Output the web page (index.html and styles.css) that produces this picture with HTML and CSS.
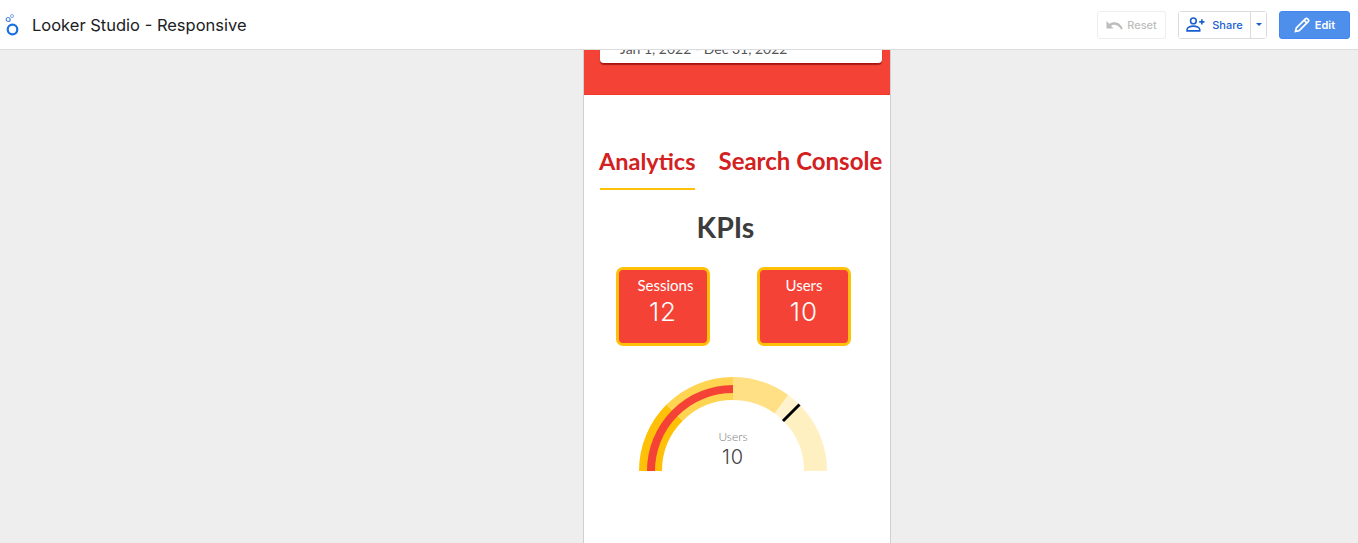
FILE: index.html
```html
<!DOCTYPE html>
<html lang="en">
<head>
  <meta charset="UTF-8" />
  <title>Looker Studio - Responsive</title>
  <link rel="stylesheet" href="styles.css">
</head>
<body>
  <header class="topbar">
    <svg class="logo" width="16" height="22" viewBox="0 0 16 22">
      <circle cx="7.500" cy="15.500" r="4.800" fill="none" stroke="#1a6fe0" stroke-width="2.200"/>
      <circle cx="3.200" cy="5.500" r="2" fill="none" stroke="#4f88e4" stroke-width="1.200"/>
      <circle cx="7" cy="2" r="1.500" fill="none" stroke="#7ea8ea" stroke-width="1"/>
    </svg>
    <div class="title">Looker Studio - Responsive</div>
    <div class="actions">
      <button class="btn btn-reset">
        <svg width="17" height="10" viewBox="0 0 17 10"><path d="M0.500 1v7.500h7L5 6C6.200 5 7.400 4.700 8.800 4.800c2.600.2 4.800 2 6.200 4.700l1.700-.8C15.200 4.700 12.400 2.300 8.800 2.200 6.800 2.100 4.800 2.700 3.200 3.800Z" fill="#bdbdbd"/></svg>
        Reset
      </button>
      <div class="share">
        <button class="btn-share">
          <svg width="19" height="15" viewBox="0 0 18 14" fill="none" stroke="#1a5fd0" stroke-width="1.500"><circle cx="7" cy="3.600" r="2.700"/><path d="M1 13v-1.300c0-2 3.200-3.200 6-3.200s6 1.200 6 3.200V13Z"/><path d="M12.500 4.500h5M15 2v5"/></svg>
          Share
        </button>
        <button class="btn-caret"><span class="caret"></span></button>
      </div>
      <button class="btn btn-edit">
        <svg width="16" height="16" viewBox="0 0 16 16" fill="none" stroke="#fff" stroke-width="1.700"><path d="M1.500 14.500l.8-3.600L11.400 1.800a1.500 1.500 0 0 1 2.100 0l.7.700a1.500 1.500 0 0 1 0 2.100L5.100 13.700Z"/><path d="M10 3.200l2.800 2.800"/></svg>
        Edit
      </button>
    </div>
  </header>

  <main class="canvas">
    <section class="page">
      <div class="banner">
        <div class="date-box">Jan 1, 2022 - Dec 31, 2022</div>
      </div>

      <nav class="tabs">
        <div class="tab tab-active">Analytics</div>
        <div class="tab">Search Console</div>
      </nav>

      <h1 class="heading">KPIs</h1>

      <div class="kpis">
        <div class="kpi kpi-sessions">
          <div class="kpi-label">Sessions</div>
          <div class="kpi-value">12</div>
        </div>
        <div class="kpi kpi-users">
          <div class="kpi-label">Users</div>
          <div class="kpi-value">10</div>
        </div>
      </div>

      <div class="gauge">
        <svg width="188" height="94" viewBox="-94 -94 188 94" fill="none">
          <!-- range bands, outer r 94 inner r 71 -->
          <g stroke-width="23">
            <path d="M-82.500 0A82.500 82.500 0 0 1 -58.340 -58.340" stroke="#ffc107"/>
            <path d="M-58.340 -58.340A82.500 82.500 0 0 1 0 -82.500" stroke="#ffd451"/>
            <path d="M0 -82.500A82.500 82.500 0 0 1 48.490 -66.740" stroke="#ffe085"/>
            <path d="M48.490 -66.740A82.500 82.500 0 0 1 58.340 -58.340" stroke="#fff2cc"/>
            <path d="M58.340 -58.340A82.500 82.500 0 0 1 82.500 0" stroke="#fff0c2"/>
          </g>
          <path d="M-82 0A82 82 0 0 1 0 -82" stroke="#f44336" stroke-width="8"/>
          <path d="M50 -50L66.500 -66.500" stroke="#000" stroke-width="3"/>
        </svg>
        <div class="gauge-text">
          <div class="gauge-label">Users</div>
          <div class="gauge-value">10</div>
        </div>
      </div>
    </section>
  </main>
</body>
</html>
```

FILE: styles.css
```css
html, body {
  height: 100%;
}
body {
  margin: 0;
  overflow: hidden;
  background-color: #eeeeee;
  font-family: "Lato", sans-serif;
  display: flex;
  flex-direction: column;
}
button {
  font-family: "Inter", sans-serif;
}
.topbar {
  height: 49px;
  flex: none;
  display: flex;
  align-items: center;
  background-color: #fff;
  border-bottom: 1px solid #dadce0;
  padding: 0 8px 0 5px;
}
.logo {
  margin-right: 11px;
}
.title {
  font-family: "Inter", sans-serif;
  font-size: 16.500px;
  color: #202124;
}
.actions {
  margin-left: auto;
  display: flex;
  align-items: center;
}
.btn {
  height: 28px;
  display: flex;
  align-items: center;
  justify-content: center;
  gap: 4px;
  border-radius: 3px;
  font-size: 11px;
  font-weight: 500;
  padding: 0;
}
.btn-reset {
  width: 69px;
  margin-right: 12px;
  background: #fff;
  border: 1px solid #eeeeee;
  color: #bdbdbd;
}
.share {
  height: 28px;
  display: flex;
  margin-right: 12px;
  border: 1px solid #dadce0;
  border-radius: 3px;
  box-sizing: border-box;
}
.btn-share {
  width: 72px;
  display: flex;
  align-items: center;
  justify-content: center;
  gap: 7px;
  background: #fff;
  border: 0;
  border-right: 1px solid #dadce0;
  color: #1a5fd0;
  font-size: 11px;
  font-weight: 500;
  padding: 0;
}
.btn-caret {
  width: 15px;
  display: flex;
  align-items: center;
  justify-content: center;
  background: #fff;
  border: 0;
  padding: 0;
}
.caret {
  border-left: 3.500px solid transparent;
  border-right: 3.500px solid transparent;
  border-top: 3.500px solid #1a5fd0;
}
.btn-edit {
  width: 71px;
  gap: 5px;
  background-color: #4f8fec;
  border: 1px solid #4285f4;
  color: #fff;
  font-weight: 600;
}
.canvas {
  flex: 1;
  min-height: 0;
  display: flex;
  padding-left: 583px;
}
.page {
  width: 308px;
  box-sizing: border-box;
  background-color: #fff;
  border-left: 1px solid #d0d0d0;
  border-right: 1px solid #d0d0d0;
  overflow: hidden;
}
.banner {
  height: 45px;
  box-sizing: border-box;
  background-color: #f44336;
  border-bottom: 1px solid #f0392b;
  padding: 0 8px 0 16px;
  overflow: hidden;
}
.date-box {
  height: 40px;
  line-height: 50px;
  margin-top: -26px;
  box-sizing: border-box;
  padding-left: 20px;
  background-color: #fff;
  border-radius: 4px;
  border-bottom: 1px solid #a11;
  box-shadow: 0 1px 1px rgba(120, 0, 0, 0.6);
  font-size: 14px;
  color: #555;
}
.tabs {
  margin-top: 50px;
  display: flex;
  gap: 23px;
  padding-left: 15px;
}
.tab {
  font-size: 24px;
  font-weight: 700;
  line-height: 32px;
  color: #d32020;
  white-space: nowrap;
}
.tab-active {
  position: relative;
  font-size: 23.500px;
  padding-bottom: 13px;
}
.tab-active::after {
  content: "";
  position: absolute;
  left: 1px;
  right: 1px;
  bottom: 0;
  height: 2px;
  background-color: #ffc107;
}
.heading {
  margin: 19px 0 0;
  padding-right: 23px;
  text-align: center;
  font-size: 28.500px;
  font-weight: 700;
  line-height: 36px;
  color: #3c3c3c;
}
.kpis {
  margin-top: 22px;
  display: flex;
  gap: 47px;
  padding-left: 32px;
}
.kpi {
  width: 94px;
  height: 79px;
  box-sizing: border-box;
  background-color: #f44336;
  border: 3px solid #ffc107;
  border-radius: 7px;
  color: #fff;
  text-align: center;
  padding-top: 5px;
}
.kpi-label {
  font-size: 15px;
  line-height: 20px;
}
.kpi-sessions .kpi-label {
  padding-left: 5px;
}
.kpi-value {
  font-family: "Inter", sans-serif;
  font-weight: 300;
  font-size: 26px;
  line-height: 33px;
  letter-spacing: 1px;
}
.gauge {
  position: relative;
  width: 188px;
  height: 94px;
  margin: 31px 0 0 55px;
}
.gauge svg {
  display: block;
}
.gauge-text {
  position: absolute;
  left: 0;
  right: 0;
  top: 52px;
  text-align: center;
}
.gauge-label {
  font-size: 12px;
  font-weight: 300;
  line-height: 16px;
  color: #777;
}
.gauge-value {
  font-family: "Inter", sans-serif;
  font-weight: 300;
  font-size: 20px;
  line-height: 25px;
  letter-spacing: 1px;
  color: #444;
}
```
